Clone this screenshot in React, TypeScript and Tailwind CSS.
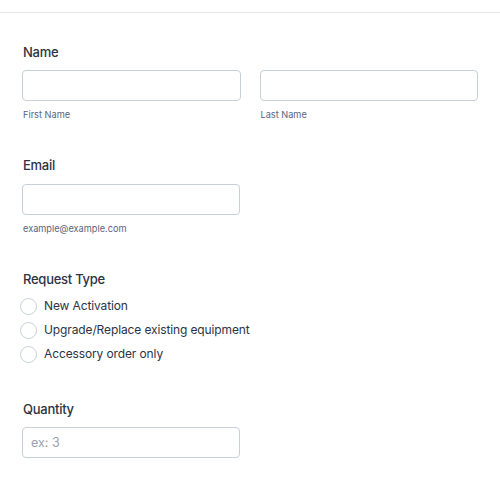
import React from "react";

const font = { fontFamily: "Inter, 'Noto Sans', sans-serif" };

function Label({ children, className = "" }: { children: React.ReactNode; className?: string }) {
  return (
    <div className={`text-[13px] leading-[20px] font-medium tracking-[-0.02em] text-[#2c3345] ${className}`}>
      {children}
    </div>
  );
}

function Sub({ children }: { children: React.ReactNode }) {
  return <div className="mt-[7px] pl-px text-[9.2px] leading-[14px] text-[#57647e]">{children}</div>;
}

function Field({ placeholder = "" }: { placeholder?: string }) {
  return (
    <input
      placeholder={placeholder}
      className="block w-full h-[31px] rounded-[4px] border border-[#c8ceda] bg-white px-[8px] text-[12.5px] text-[#2c3345] placeholder:text-[#9aa1ad] outline-none"
    />
  );
}

function Radio({ label }: { label: string }) {
  return (
    <div className="flex items-center h-[24px]">
      <span className="ml-[-2px] w-[17px] h-[17px] rounded-full border border-[#c8ceda] bg-white" />
      <span className="ml-[7px] text-[12px] tracking-[-0.01em] text-[#2c3345]">{label}</span>
    </div>
  );
}

export default function App() {
  return (
    <div style={font} className="w-[500px] h-[484px] bg-white overflow-hidden">
      <div className="mt-[12px] h-px bg-[#e3e5ea]" />
      <div className="px-[22px]">
        <Label className="mt-[29px] pl-px">Name</Label>
        <div className="mt-[8px] grid grid-cols-2 gap-[19px]">
          <div>
            <Field />
            <Sub>First Name</Sub>
          </div>
          <div>
            <Field />
            <Sub>Last Name</Sub>
          </div>
        </div>

        <Label className="mt-[33px] pl-px">Email</Label>
        <div className="mt-[9px] w-[218px]">
          <Field />
          <Sub>example@example.com</Sub>
        </div>

        <Label className="mt-[33px] pl-px">Request Type</Label>
        <div className="mt-[5px] flex flex-col">
          <Radio label="New Activation" />
          <Radio label="Upgrade/Replace existing equipment" />
          <Radio label="Accessory order only" />
        </div>

        <Label className="mt-[33px] pl-px">Quantity</Label>
        <div className="mt-[8px] w-[218px]">
          <Field placeholder="ex: 3" />
        </div>
      </div>
    </div>
  );
}
